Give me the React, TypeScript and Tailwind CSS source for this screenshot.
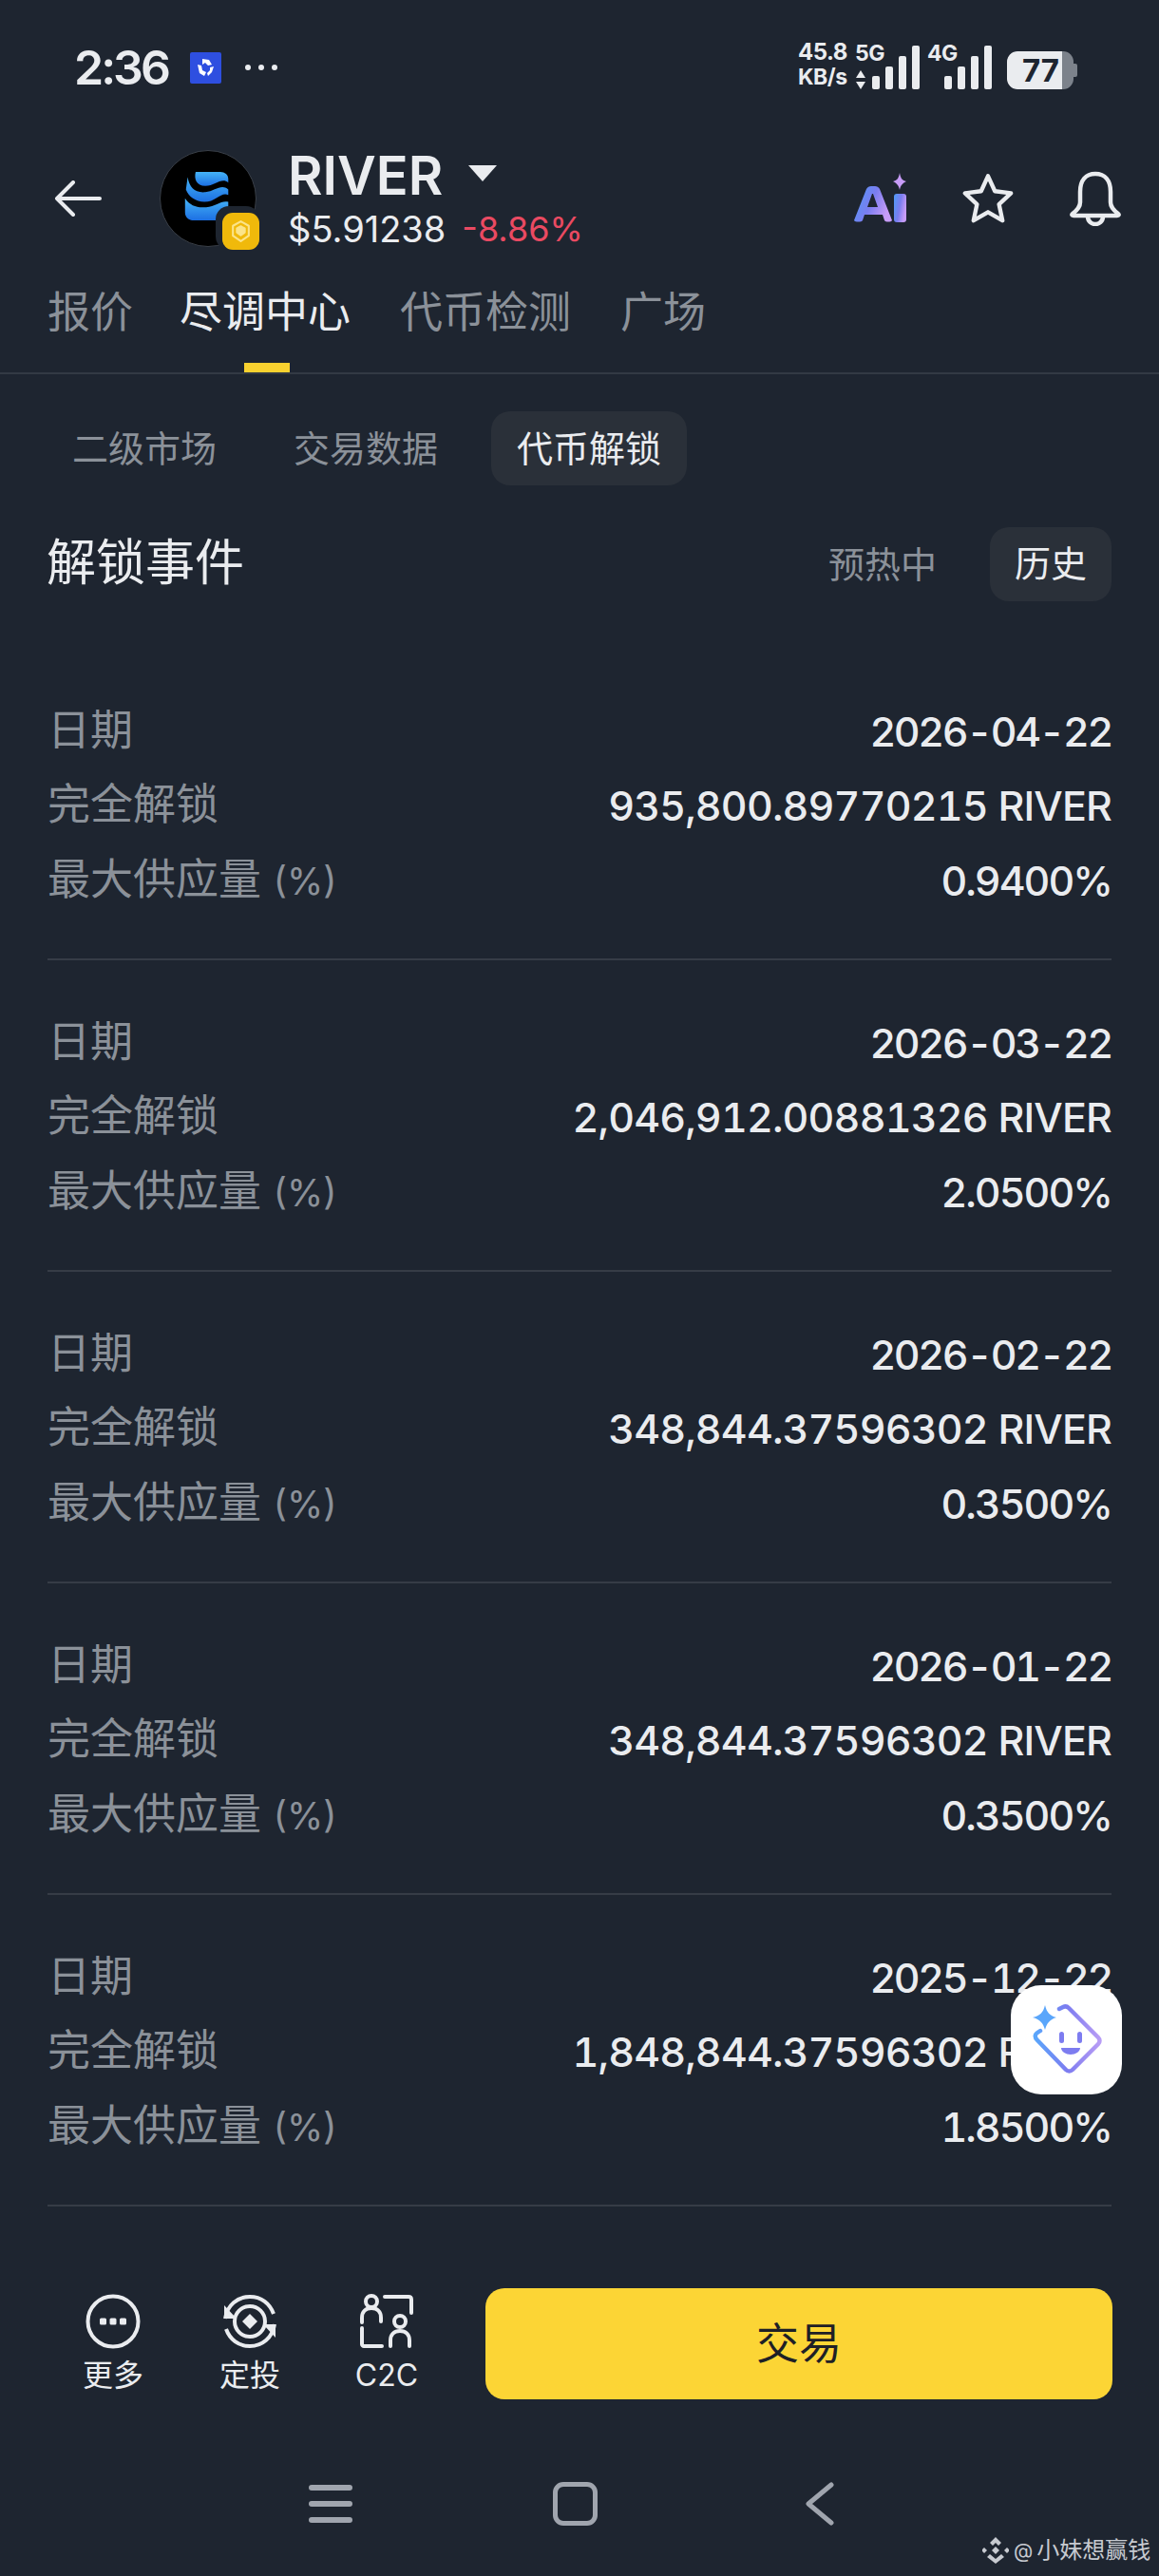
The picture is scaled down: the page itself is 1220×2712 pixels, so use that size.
import React from "react";

const FONT = "font-['Inter','Noto_Sans_CJK_SC',sans-serif]";

const rows = [
  { date: "2026-04-22", amount: "935,800.89770215 RIVER", pct: "0.9400%" },
  { date: "2026-03-22", amount: "2,046,912.00881326 RIVER", pct: "2.0500%" },
  { date: "2026-02-22", amount: "348,844.37596302 RIVER", pct: "0.3500%" },
  { date: "2026-01-22", amount: "348,844.37596302 RIVER", pct: "0.3500%" },
  { date: "2025-12-22", amount: "1,848,844.37596302 RIVER", pct: "1.8500%" },
];

function Bars() {
  return (
    <div className="flex items-end gap-[6px] h-[46px]">
      <div className="w-[8px] h-[14px] rounded-[2px] bg-[#eaecef]" />
      <div className="w-[8px] h-[24px] rounded-[2px] bg-[#eaecef]" />
      <div className="w-[8px] h-[35px] rounded-[2px] bg-[#eaecef]" />
      <div className="w-[8px] h-[46px] rounded-[2px] bg-[#eaecef]" />
    </div>
  );
}

function StatusBar() {
  return (
    <div className="flex items-center justify-between h-[142px] pl-[78px] pr-[86px]">
      <div className="flex items-center">
        <span className="text-[50px] leading-none font-semibold text-[#eaecef] tracking-[-3px]">2:36</span>
        <div className="ml-[23px] w-[33px] h-[33px] bg-[#2e4fe0] rounded-[2px] flex items-center justify-center">
          <svg viewBox="0 0 24 24" className="w-[24px] h-[24px]">
            <path d="M9 3l7 1 3 5-4 1-3-3-3 2zM4 9l4 1 1 5 4 2-2 4-5-3zM21 11l-2 6-4 4-1-3 3-3-0-3z" fill="#fff" />
          </svg>
        </div>
        <div className="ml-[25px] flex gap-[8px]">
          <div className="w-[6px] h-[6px] rounded-full bg-[#eaecef]" />
          <div className="w-[6px] h-[6px] rounded-full bg-[#eaecef]" />
          <div className="w-[6px] h-[6px] rounded-full bg-[#eaecef]" />
        </div>
      </div>
      <div className="flex items-end h-[46px]">
        <div className="flex flex-col text-[#eaecef] text-[24px] leading-[26px] font-bold tracking-[-0.5px] w-[60px] whitespace-nowrap">
          <span>45.8</span>
          <span className="text-[23px]">KB/s</span>
        </div>
        <div className="relative flex items-end h-[46px]">
          <span className="absolute left-[0px] top-[-5px] text-[23px] leading-[26px] font-bold text-[#eaecef] tracking-[-0.5px]">5G</span>
          <svg viewBox="0 0 12 20" className="w-[12px] h-[20px] mr-[6px]">
            <path d="M6 0l5 8H1zM6 20l-5-8h10z" fill="#eaecef" />
          </svg>
          <Bars />
        </div>
        <div className="relative flex items-end h-[46px] ml-[8px] pl-[18px]">
          <span className="absolute left-[0px] top-[-5px] text-[23px] leading-[26px] font-bold text-[#eaecef] tracking-[-0.5px]">4G</span>
          <Bars />
        </div>
        <div className="flex items-center ml-[16px]">
          <div className="relative w-[70px] h-[40px] rounded-[11px] bg-[#7c828b] overflow-hidden">
            <div className="absolute left-0 top-0 h-full w-[58px] bg-[#eaecef] rounded-l-[11px]" />
            <span className="absolute left-[16px] top-[2px] text-[33px] leading-[36px] font-bold text-[#1e2530]">77</span>
          </div>
          <div className="w-[4px] h-[14px] bg-[#7c828b] rounded-r-[2px]" />
        </div>
      </div>
    </div>
  );
}

function Avatar() {
  return (
    <div className="relative w-[102px] h-[102px] shrink-0">
      <div className="w-[102px] h-[102px] rounded-full bg-black border border-[#3a4049] flex items-center justify-center">
        <svg viewBox="0 0 50 56" className="w-[48px] h-[52px] -mt-[4px] -ml-[3px]">
          <defs>
            <linearGradient id="rv" x1="0" y1="0" x2="0" y2="1">
              <stop offset="0" stopColor="#45b4f7" />
              <stop offset="1" stopColor="#1c6fe3" />
            </linearGradient>
          </defs>
          <path d="M12 0h28c5 0 9 3 9 8v4c-8-6-15 4-26 4C13 16 10 8 12 0z" fill="url(#rv)" />
          <path d="M3 6c2 12 8 18 20 17 11-1 18-10 26-3v6c-8-4-14 8-27 8C12 34 4 28 1 20z" fill="url(#rv)" />
          <path d="M0 30c6 9 14 11 24 10 11-1 17-8 25-6v14c0 4-4 7-8 7H10c-6 0-10-4-10-9z" fill="url(#rv)" />
        </svg>
      </div>
      <div className="absolute right-[-3px] bottom-[-3px] w-[46px] h-[46px] rounded-[14px] bg-[#1e2530] flex items-end justify-end">
        <div className="w-[39px] h-[39px] rounded-[11px] bg-[#f0b90b] flex items-center justify-center">
          <svg viewBox="0 0 24 24" className="w-[25px] h-[25px]" fill="none" stroke="#fbe48a" strokeWidth="2" strokeLinejoin="round">
            <path d="M12 2l8 4.5v10L12 22l-8-5.5v-10z" />
            <path d="M8 9l4-2 4 2v4l-4 3-4-3z" fill="#fbe48a" />
          </svg>
        </div>
      </div>
    </div>
  );
}

function Header() {
  return (
    <div className="flex items-center justify-between h-[134px] pl-[57px] pr-[39px]">
      <div className="flex items-center">
        <svg viewBox="0 0 50 38" className="w-[50px] h-[38px]" fill="none" stroke="#eaecef" strokeWidth="4" strokeLinecap="round" strokeLinejoin="round">
          <path d="M48 19H3M20 2L3 19l17 17" />
        </svg>
        <div className="ml-[61px]">
          <Avatar />
        </div>
        <div className="ml-[33px] flex flex-col">
          <div className="flex items-center h-[62px] pt-[4px]">
            <span className="text-[56px] leading-none font-semibold text-[#eaecef]">RIVER</span>
            <div className="ml-[27px] -mt-[6px] w-0 h-0 border-l-[15px] border-r-[15px] border-t-[17px] border-l-transparent border-r-transparent border-t-[#eaecef]" />
          </div>
          <div className="flex items-center h-[50px] mt-[2px] whitespace-nowrap">
            <span className="text-[38px] leading-none text-[#eaecef]">$5.91238</span>
            <span className="ml-[17px] text-[36px] leading-none text-[#ea4a62]">-8.86%</span>
          </div>
        </div>
      </div>
      <div className="flex items-center pr-[1px]">
        <svg viewBox="0 0 60 56" className="w-[60px] h-[56px] mt-[2px]">
          <defs>
            <linearGradient id="ai" x1="0" y1="0" x2="1" y2="0.4">
              <stop offset="0" stopColor="#4d9bf7" />
              <stop offset="0.55" stopColor="#7a7df0" />
              <stop offset="1" stopColor="#c79cf7" />
            </linearGradient>
          </defs>
          <path d="M1 50L14 17c1-2 3-3 5-3h4c2 0 4 1 5 3l13 33c-1 2-7 2-8 0l-2-6H12l-2 6c-1 2-8 2-9 0zM15 36h11l-5-14h-1z" fill="url(#ai)" fillRule="evenodd" />
          <rect x="43" y="22" width="13" height="30" rx="3" fill="url(#ai)" />
          <path d="M49 0c1 6 3 8 7 9-4 2-6 4-7 9-1-5-3-7-7-9 4-1 6-3 7-9z" fill="#c79cf7" />
        </svg>
        <svg viewBox="0 0 24 24" className="w-[58px] h-[58px] ml-[53px]" fill="none" stroke="#eaecef" strokeWidth="1.8" strokeLinejoin="round">
          <path d="M12 2.2l3 6.6 7 .9-5.2 4.8 1.5 7.1-6.3-3.7-6.3 3.7 1.5-7.1L2 9.7l7-.9z" />
        </svg>
        <svg viewBox="0 0 54 58" className="w-[54px] h-[58px] ml-[57px]" fill="none" stroke="#eaecef" strokeWidth="4.5" strokeLinecap="round" strokeLinejoin="round">
          <path d="M11 22C11 10 17 3 27 3s16 7 16 19v11c0 5 4 9 8 12 1 1 1 2-1 2H4c-2 0-2-1-1-2 4-3 8-7 8-12z" />
          <path d="M19 48c0 5 4 8 8 8s8-3 8-8" />
        </svg>
      </div>
    </div>
  );
}

function Tabs() {
  return (
    <div className="flex items-start h-[91px] pl-[50px] gap-[52px] border-b-2 border-[#333a44] text-[45px] leading-[56px] mt-[25px] box-content text-[#8b9199] shrink-0">
      <span>报价</span>
      <div className="relative h-[91px] -ml-[3px]">
        <span className="text-[#eaecef]">尽调中心</span>
        <div className="absolute left-[68px] bottom-0 w-[48px] h-[10px] bg-[#f8d12f]" />
      </div>
      <span>代币检测</span>
      <span>广场</span>
    </div>
  );
}

function SubTabs() {
  return (
    <div className="flex items-center pl-[49px] mt-[39px] h-[78px] text-[38px] text-[#8b9199] shrink-0">
      <span className="px-[27px]">二级市场</span>
      <span className="px-[27px] ml-[27px]">交易数据</span>
      <span className="px-[27px] ml-[29px] h-[78px] flex items-center rounded-[20px] bg-[#2a3039] text-[#eaecef]">代币解锁</span>
    </div>
  );
}

function EventHead() {
  return (
    <div className="flex items-center justify-between pl-[49px] pr-[50px] mt-[44px] h-[78px] shrink-0">
      <span className="text-[52px] leading-none text-[#eaecef] pb-[3px]">解锁事件</span>
      <div className="flex items-center text-[38px]">
        <span className="text-[#8b9199] mr-[50px] px-[6px]">预热中</span>
        <span className="h-[78px] px-[26px] flex items-center rounded-[20px] bg-[#2a3039] text-[#eaecef] pb-[2px]">历史</span>
      </div>
    </div>
  );
}

function Row({ r }: { r: (typeof rows)[number] }) {
  return (
    <div className="mx-[50px] h-[328px] shrink-0 pt-[48px] border-b-2 border-[#363c46] text-[#8b9199] box-border">
      <div className="flex justify-between items-center h-[78px]">
        <span className="text-[45px] pb-[3px]">日期</span>
        <span className="text-[43px] font-medium tabular-nums tracking-[-2.4px] text-[#eaecef] whitespace-nowrap">{r.date}</span>
      </div>
      <div className="flex justify-between items-center h-[79px]">
        <span className="text-[45px] pb-[3px]">完全解锁</span>
        <span className="text-[43px] font-medium tabular-nums tracking-[-0.85px] text-[#eaecef] whitespace-nowrap">{r.amount}</span>
      </div>
      <div className="flex justify-between items-center h-[79px]">
        <span className="text-[45px] pb-[3px]">
          最大供应量 <span className="text-[39px]">(%)</span>
        </span>
        <span className="text-[43px] font-medium tabular-nums tracking-[-2px] text-[#eaecef] whitespace-nowrap">{r.pct}</span>
      </div>
    </div>
  );
}

function ActionItem({ icon, label }: { icon: React.ReactNode; label: string }) {
  return (
    <div className="w-[144px] flex flex-col items-center">
      <div className="h-[58px] flex items-center justify-center">{icon}</div>
      <span className="mt-[8px] text-[32px] leading-[40px] text-[#eaecef]">{label}</span>
    </div>
  );
}

function BottomBar() {
  return (
    <div className="flex items-center pl-[47px] pr-[49px] h-[117px]">
      <ActionItem
        label="更多"
        icon={
          <svg viewBox="0 0 58 58" className="w-[58px] h-[58px]" fill="none">
            <circle cx="29" cy="29" r="26.5" stroke="#eaecef" strokeWidth="4" />
            <rect x="15" y="25.5" width="7" height="7" rx="1.5" fill="#eaecef" />
            <rect x="25.5" y="25.5" width="7" height="7" rx="1.5" fill="#eaecef" />
            <rect x="36" y="25.5" width="7" height="7" rx="1.5" fill="#eaecef" />
          </svg>
        }
      />
      <ActionItem
        label="定投"
        icon={
          <svg viewBox="0 0 58 58" className="w-[58px] h-[58px]" fill="none" stroke="#eaecef" strokeWidth="4">
            <path d="M3 26C5 12 16 3 29 3c12 0 21 7 25 18" />
            <path d="M55 32C53 46 42 55 29 55 17 55 8 48 4 37" />
            <path d="M2 12v14h13" fill="#eaecef" stroke="none" />
            <path d="M56 46V32H43" fill="#eaecef" stroke="none" />
            <circle cx="29" cy="29" r="16" />
            <path d="M29 21l8 8-8 8-8-8z" fill="#eaecef" stroke="none" />
          </svg>
        }
      />
      <ActionItem
        label="C2C"
        icon={
          <svg viewBox="0 0 56 58" className="w-[56px] h-[58px]" fill="none" stroke="#eaecef" strokeWidth="4" strokeLinecap="round">
            <circle cx="12" cy="8" r="6" />
            <path d="M2 30v-5c0-6 4-10 10-10s10 4 10 10v4" />
            <path d="M26 3h25c2 0 3 1 3 3v14" />
            <path d="M2 36v17c0 1 1 2 2 2h19" />
            <circle cx="42" cy="29" r="6" />
            <path d="M32 55v-6c0-6 4-10 10-10s10 4 10 10v6" />
          </svg>
        }
      />
      <div className="ml-[32px] flex-1 h-[117px] rounded-[20px] bg-[#fcd535] flex items-center justify-center text-[45px] text-[#1e2026]">
        交易
      </div>
    </div>
  );
}

function NavBar() {
  return (
    <div className="flex items-center mt-[87px] h-[46px] pl-[325px] shrink-0">
      <div className="flex flex-col gap-[11px] w-[46px]">
        <div className="h-[6px] rounded-full bg-[#a0a5ae]" />
        <div className="h-[6px] rounded-full bg-[#a0a5ae]" />
        <div className="h-[6px] rounded-full bg-[#a0a5ae]" />
      </div>
      <div className="ml-[211px] w-[47px] h-[46px] rounded-[11px] border-[5px] border-[#a0a5ae]" />
      <svg viewBox="0 0 30 46" className="ml-[219px] w-[30px] h-[46px]" fill="none" stroke="#a0a5ae" strokeWidth="5" strokeLinecap="round" strokeLinejoin="round">
        <path d="M27 3L3 23l24 20" />
      </svg>
    </div>
  );
}

export default function App() {
  return (
    <div className={`relative w-[1220px] h-[2712px] overflow-hidden bg-[#1e2530] flex flex-col ${FONT}`}>
      <StatusBar />
      <Header />
      <Tabs />
      <SubTabs />
      <EventHead />
      <div className="mt-[50px] flex flex-col">
        {rows.map((r) => (
          <Row key={r.date} r={r} />
        ))}
      </div>
      <div className="mt-[86px] shrink-0">
        <BottomBar />
      </div>
      <NavBar />

      {/* floating assistant button */}
      <div className="absolute left-[1064px] top-[2090px] w-[117px] h-[115px] rounded-[32px] bg-white flex items-center justify-center">
        <svg viewBox="0 0 76 76" className="w-[76px] h-[76px]" fill="none">
          <defs>
            <linearGradient id="fb" x1="0" y1="0" x2="1" y2="0">
              <stop offset="0" stopColor="#5aa6fb" />
              <stop offset="0.5" stopColor="#7d7cf0" />
              <stop offset="1" stopColor="#b79cf5" />
            </linearGradient>
          </defs>
          <path d="M30 5l4-2c2-1 4-1 6 1l31 31c2 2 2 5 0 7L44 69c-2 2-5 2-7 0L7 38c-3-3-3-6 0-8l3-2" stroke="url(#fb)" strokeWidth="4.5" strokeLinecap="round" />
          <path d="M15 1c2 8 5 11 12 13-7 2-10 6-12 13-2-7-5-11-13-13 8-2 11-5 13-13z" fill="#5aa6fb" />
          <rect x="30" y="29" width="5" height="12" rx="2.5" fill="#7d7cf0" />
          <rect x="49" y="29" width="5" height="12" rx="2.5" fill="#7d7cf0" />
          <path d="M32 46h20c0 4-5 7-10 7s-10-3-10-7z" fill="#7d7cf0" />
        </svg>
      </div>

      {/* watermark */}
      <div className="absolute left-[1034px] top-[2670px] flex items-center h-[30px] leading-none text-[#c7cad0] whitespace-nowrap">
        <svg viewBox="0 0 28 28" className="w-[28px] h-[28px]" fill="#c7cad0">
          <path d="M14 0l6 6-3 3-3-3-3 3-3-3zM2 11l3 3-3 3-3-3zM26 11l3 3-3 3-3-3zM14 10l4 4-4 4-4-4zM8 18l6 5 6-5 3 3-9 7-9-7z" />
        </svg>
        <span className="ml-[5px] text-[21px]">@</span>
        <span className="ml-[4px] text-[24px]">小妹想赢钱</span>
      </div>
    </div>
  );
}
